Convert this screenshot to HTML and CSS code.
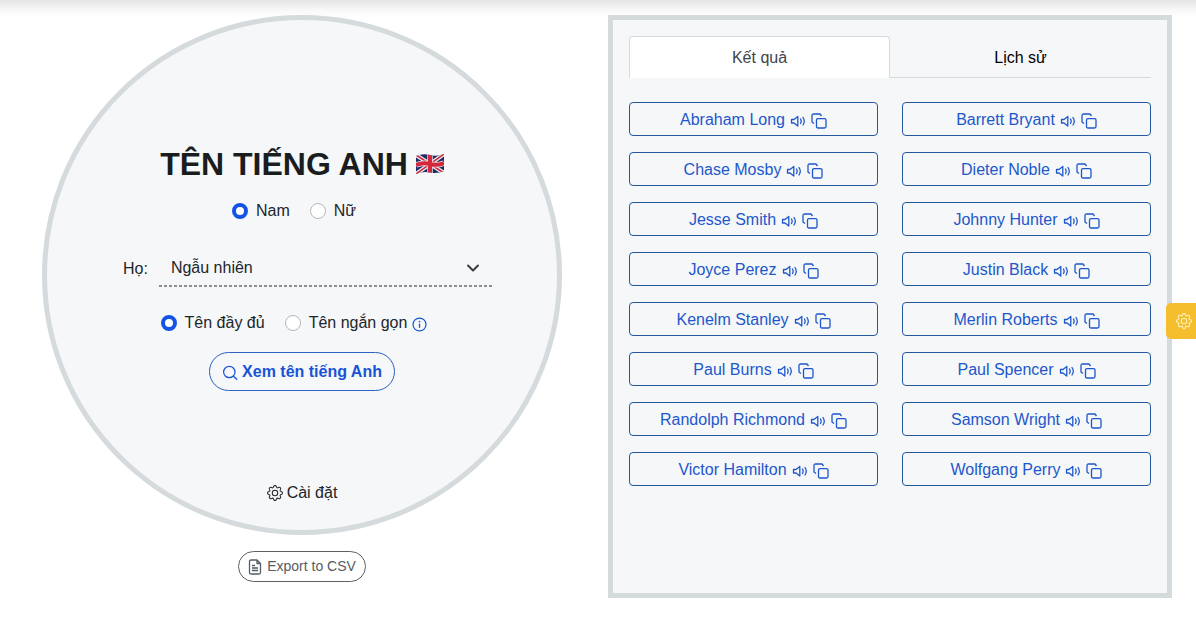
FILE: index.html
```html
<!DOCTYPE html>
<html lang="vi">
<head>
<meta charset="utf-8">
<meta name="viewport" content="width=device-width, initial-scale=1">
<title>Tên tiếng Anh</title>
<link rel="stylesheet" href="styles.css">
</head>
<body>
<svg class="sprite" aria-hidden="true">
  <symbol id="volume" viewBox="0 0 16 16"><path d="M1.500 6.500h2.500L7.800 3.500v9.500L4 10h-2.500zM10.500 6q1.300 2.200 0 4.500M13 4.500q2.600 3.700 0 7.500" fill="none" stroke="currentColor" stroke-width="1.300" stroke-linejoin="round" stroke-linecap="round"/></symbol>
  <symbol id="copy" viewBox="0 0 16 16"><path d="M3 10.500L1 9V2.500Q1 1 2.500 1H9l1.500 2M7 5.600h6.500q1.500 0 1.500 1.500v6.400q0 1.500-1.500 1.500H7q-1.500 0-1.500-1.500V7.100q0-1.500 1.500-1.500z" fill="none" stroke="currentColor" stroke-width="1.300" stroke-linejoin="round"/></symbol>
  <symbol id="gear" viewBox="0 0 16 16"><path d="M8 4.754a3.246 3.246 0 1 0 0 6.492 3.246 3.246 0 0 0 0-6.492M5.754 8a2.246 2.246 0 1 1 4.492 0 2.246 2.246 0 0 1-4.492 0"/><path d="M9.796 1.343c-.527-1.790-3.065-1.790-3.592 0l-.094.319a.873.873 0 0 1-1.255.520l-.292-.160c-1.640-.892-3.433.902-2.540 2.541l.159.292a.873.873 0 0 1-.520 1.255l-.319.094c-1.790.527-1.790 3.065 0 3.592l.319.094a.873.873 0 0 1 .520 1.255l-.160.292c-.892 1.640.901 3.434 2.541 2.540l.292-.159a.873.873 0 0 1 1.255.520l.094.319c.527 1.790 3.065 1.790 3.592 0l.094-.319a.873.873 0 0 1 1.255-.520l.292.160c1.640.893 3.434-.902 2.540-2.541l-.159-.292a.873.873 0 0 1 .520-1.255l.319-.094c1.790-.527 1.790-3.065 0-3.592l-.319-.094a.873.873 0 0 1-.520-1.255l.160-.292c.893-1.640-.902-3.433-2.541-2.540l-.292.159a.873.873 0 0 1-1.255-.520zm-2.633.283c.246-.835 1.428-.835 1.674 0l.094.319a1.873 1.873 0 0 0 2.693 1.115l.291-.160c.764-.415 1.600.420 1.184 1.185l-.159.292a1.873 1.873 0 0 0 1.116 2.692l.318.094c.835.246.835 1.428 0 1.674l-.319.094a1.873 1.873 0 0 0-1.115 2.693l.160.291c.415.764-.420 1.600-1.185 1.184l-.291-.159a1.873 1.873 0 0 0-2.693 1.116l-.094.318c-.246.835-1.428.835-1.674 0l-.094-.319a1.873 1.873 0 0 0-2.692-1.115l-.292.160c-.764.415-1.600-.420-1.184-1.185l.159-.291A1.873 1.873 0 0 0 1.945 8.930l-.319-.094c-.835-.246-.835-1.428 0-1.674l.319-.094A1.873 1.873 0 0 0 3.060 4.377l-.160-.292c-.415-.764.420-1.600 1.185-1.184l.292.159a1.873 1.873 0 0 0 2.692-1.115z"/></symbol>
</svg>

<div class="top-shade"></div>

<main class="page">
  <section class="picker">
    <form class="circle">
      <h1 class="title">TÊN TIẾNG ANH
        <svg class="flag" viewBox="0 0 28 22" role="img" aria-label="Cờ Anh">
          <clipPath id="wave"><path d="M0 3Q7 0 14 2T28 1V18Q21 21 14 19.500T0 21z"/></clipPath>
          <g clip-path="url(#wave)">
            <path d="M0 0h28v22H0z" fill="#1f2c68"/>
            <path d="M0 2l28 18M28 1L0 21" stroke="#f1eef2" stroke-width="4"/>
            <path d="M0 2l28 18M28 1L0 21" stroke="#c92b3e" stroke-width="1.500"/>
            <path d="M14 0v22M0 12Q7 9 14 11T28 10" fill="none" stroke="#f1dfe5" stroke-width="5.500"/>
            <path d="M14 0v22M0 12Q7 9 14 11T28 10" fill="none" stroke="#d3283a" stroke-width="4"/>
          </g>
        </svg>
      </h1>
      <div class="choices">
        <label class="choice"><input class="radio" type="radio" name="gender" checked>Nam</label>
        <label class="choice"><input class="radio" type="radio" name="gender">Nữ</label>
      </div>
      <div class="surname">
        <label for="surname">Họ:</label>
        <div class="select-wrap">
          <select class="select" id="surname"><option>Ngẫu nhiên</option></select>
          <svg class="chevron" viewBox="0 0 16 16" aria-hidden="true"><path d="M3 5.500l5 5 5-5" fill="none" stroke="#343a40" stroke-width="1.900" stroke-linecap="round" stroke-linejoin="round"/></svg>
        </div>
      </div>
      <div class="choices">
        <label class="choice"><input class="radio" type="radio" name="length" checked>Tên đầy đủ</label>
        <label class="choice"><input class="radio" type="radio" name="length">Tên ngắn gọn
          <svg class="info" viewBox="0 0 16 16" aria-hidden="true"><circle cx="8" cy="8" r="6.900" fill="none" stroke="currentColor" stroke-width="1.300"/><path d="M8 7v4.500" stroke="currentColor" stroke-width="1.400"/><circle cx="8" cy="4.900" r=".9" fill="currentColor"/></svg>
        </label>
      </div>
      <button class="submit" type="button">
        <svg class="icon-search" viewBox="0 0 16 16" aria-hidden="true"><circle cx="7.300" cy="8" r="5.700" fill="none" stroke="currentColor" stroke-width="1.200"/><path d="M11.500 12.200l3.200 3.100" stroke="currentColor" stroke-width="1.300" stroke-linecap="round"/></svg>Xem tên tiếng Anh</button>
      <button class="settings" type="button"><svg class="icon" aria-hidden="true"><use href="#gear"/></svg>Cài đặt</button>
    </form>
    <button class="export" type="button">
      <svg class="icon-file" viewBox="0 0 14 16" aria-hidden="true"><path d="M9 1H3Q1.500 1 1.500 2.500v11Q1.500 15 3 15h8q1.500 0 1.500-1.500v-9zM9 1v3.500h3.500M4 6.500h3M4 9h6M4 11.500h6" fill="none" stroke="currentColor" stroke-width="1.300" stroke-linejoin="round"/></svg>Export to CSV</button>
  </section>

  <section class="panel">
    <div class="tabs" role="tablist">
      <button class="tab tab-active" type="button" role="tab" aria-selected="true">Kết quả</button>
      <button class="tab" type="button" role="tab" aria-selected="false">Lịch sử</button>
    </div>
    <div class="names">
      <button class="name" type="button">Abraham Long<svg class="icon"><use href="#volume"/></svg><svg class="icon"><use href="#copy"/></svg></button>
      <button class="name" type="button">Barrett Bryant<svg class="icon"><use href="#volume"/></svg><svg class="icon"><use href="#copy"/></svg></button>
      <button class="name" type="button">Chase Mosby<svg class="icon"><use href="#volume"/></svg><svg class="icon"><use href="#copy"/></svg></button>
      <button class="name" type="button">Dieter Noble<svg class="icon"><use href="#volume"/></svg><svg class="icon"><use href="#copy"/></svg></button>
      <button class="name" type="button">Jesse Smith<svg class="icon"><use href="#volume"/></svg><svg class="icon"><use href="#copy"/></svg></button>
      <button class="name" type="button">Johnny Hunter<svg class="icon"><use href="#volume"/></svg><svg class="icon"><use href="#copy"/></svg></button>
      <button class="name" type="button">Joyce Perez<svg class="icon"><use href="#volume"/></svg><svg class="icon"><use href="#copy"/></svg></button>
      <button class="name" type="button">Justin Black<svg class="icon"><use href="#volume"/></svg><svg class="icon"><use href="#copy"/></svg></button>
      <button class="name" type="button">Kenelm Stanley<svg class="icon"><use href="#volume"/></svg><svg class="icon"><use href="#copy"/></svg></button>
      <button class="name" type="button">Merlin Roberts<svg class="icon"><use href="#volume"/></svg><svg class="icon"><use href="#copy"/></svg></button>
      <button class="name" type="button">Paul Burns<svg class="icon"><use href="#volume"/></svg><svg class="icon"><use href="#copy"/></svg></button>
      <button class="name" type="button">Paul Spencer<svg class="icon"><use href="#volume"/></svg><svg class="icon"><use href="#copy"/></svg></button>
      <button class="name" type="button">Randolph Richmond<svg class="icon"><use href="#volume"/></svg><svg class="icon"><use href="#copy"/></svg></button>
      <button class="name" type="button">Samson Wright<svg class="icon"><use href="#volume"/></svg><svg class="icon"><use href="#copy"/></svg></button>
      <button class="name" type="button">Victor Hamilton<svg class="icon"><use href="#volume"/></svg><svg class="icon"><use href="#copy"/></svg></button>
      <button class="name" type="button">Wolfgang Perry<svg class="icon"><use href="#volume"/></svg><svg class="icon"><use href="#copy"/></svg></button>
    </div>
  </section>
</main>

<button class="float-settings" type="button" aria-label="Cài đặt"><svg class="icon"><use href="#gear"/></svg></button>
</body>
</html>
```

FILE: styles.css
```css
* { box-sizing: border-box; }

body {
  margin: 0;
  background: #fff;
  color: #212529;
  font: 16px/24px "Liberation Sans", Arial, sans-serif;
}

button, select {
  margin: 0;
  background: none;
  border: 0;
  color: inherit;
  font: inherit;
}

.sprite {
  position: absolute;
  width: 0;
  height: 0;
}

.top-shade {
  position: absolute;
  inset: 0 0 auto;
  height: 18px;
  background: linear-gradient(#e4e4e4, #f8f8f8 55%, #fff);
}

.page {
  position: relative;
  display: grid;
  grid-template-columns: 1fr 1fr;
  gap: 24px;
  padding: 15px 24px 20px 20px;
}

.picker {
  display: flex;
  flex-direction: column;
  align-items: center;
  gap: 16px;
}

.circle {
  display: flex;
  flex-direction: column;
  align-items: center;
  width: 100%;
  max-width: 520px;
  aspect-ratio: 1;
  padding: 125px 64px 25px;
  background: #f5f7f9;
  border: 5px solid #d5dadd;
  border-radius: 50%;
}

.title {
  display: flex;
  align-items: center;
  gap: 8px;
  margin: 0 0 16px;
  color: #1a1d20;
  font-size: 32px;
  line-height: 38px;
  font-weight: 700;
  white-space: nowrap;
}

.flag {
  width: 28px;
  height: 22px;
}

.choices {
  display: flex;
  justify-content: center;
  gap: 20px;
  padding-right: 16px;
}

.choice {
  display: flex;
  align-items: center;
  gap: 8px;
}

.radio {
  appearance: none;
  width: 16px;
  height: 16px;
  margin: 0;
  background: #fff;
  border: 1px solid #b5b7ba;
  border-radius: 50%;
}

.radio:checked { border: 4px solid #1553e6; }

.info {
  width: 15px;
  height: 15px;
  margin: 2px 0 0 -3px;
  color: #1559d6;
}

.surname {
  display: flex;
  align-items: center;
  gap: 11px;
  width: 100%;
  margin: 25px 0 24px;
  padding: 2px 0 0 12px;
}

.select-wrap {
  display: grid;
  flex: 1;
  align-items: center;
  padding-bottom: 2px;
  background: repeating-linear-gradient(90deg, #8b8f93 0 3px, transparent 3px 5px) bottom / 100% 2px no-repeat;
}

.select {
  grid-area: 1 / 1;
  appearance: none;
  width: 100%;
  height: 35px;
  padding: 0 36px 0 12px;
}

.chevron {
  grid-area: 1 / 1;
  justify-self: end;
  width: 16px;
  height: 16px;
  margin-right: 12px;
  pointer-events: none;
}

.submit {
  display: flex;
  align-items: center;
  gap: 4px;
  margin-top: 17px;
  padding: 7px 12px 6px;
  border: 1px solid #2b62c4;
  border-radius: 24px;
  color: #1853d6;
  font-weight: 700;
}

.icon-search {
  width: 16px;
  height: 16px;
}

.settings {
  display: flex;
  align-items: center;
  gap: 4px;
  margin-top: auto;
  padding: 0;
}

.icon {
  width: 16px;
  height: 16px;
  fill: currentColor;
}

.export {
  display: flex;
  align-items: center;
  gap: 5px;
  padding: 4px 9px;
  border: 1px solid #5d6166;
  border-radius: 16px;
  color: #565c63;
  font-size: 14px;
  line-height: 21px;
}

.icon-file {
  width: 14px;
  height: 16px;
}

.panel {
  min-height: 583px;
  padding: 16px;
  background: #f5f7f9;
  border: 5px solid #d5dadd;
}

.tabs {
  display: grid;
  grid-template-columns: 1fr 1fr;
  border-bottom: 1px solid #d5dadd;
}

.tab {
  padding: 9px 16px 7px;
  border: 1px solid transparent;
  border-bottom: 0;
  color: #000;
}

.tab-active {
  margin-bottom: -1px;
  padding-bottom: 8px;
  background: #fff;
  border-color: #d5dadd;
  border-radius: 4px 4px 0 0;
  color: #3f4449;
}

.names {
  display: grid;
  grid-template-columns: 1fr 1fr;
  gap: 16px 24px;
  padding-top: 24px;
}

.name {
  display: flex;
  align-items: center;
  justify-content: center;
  gap: 5px;
  padding: 5px 8px 3px;
  border: 1px solid #24589f;
  border-radius: 4px;
  color: #1d57cb;
  white-space: nowrap;
}

.name .icon { margin-top: 2px; }

.float-settings {
  position: fixed;
  top: 303px;
  right: 0;
  display: flex;
  padding: 10px 4px 10px 10px;
  background: #f5be2e;
  border-radius: 5px 0 0 5px;
  color: #fff3c4;
}
```
